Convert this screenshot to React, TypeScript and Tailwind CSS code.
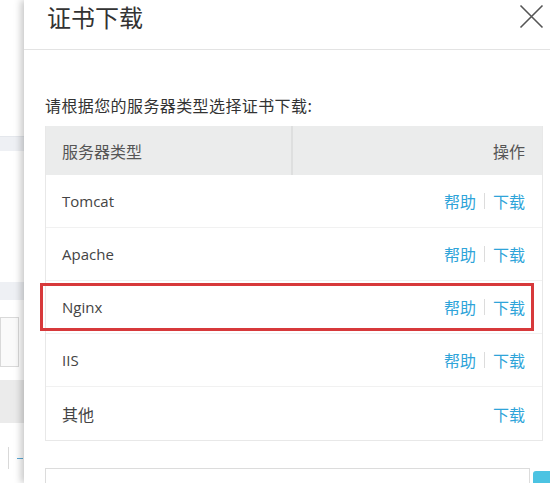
import React from "react";

const cjk = { fontFamily: '"Microsoft YaHei", "Noto Sans CJK SC", "Noto Sans", sans-serif' };
const latin = { fontFamily: '"Open Sans", "Noto Sans CJK SC", sans-serif' };

const rows: { name: string; help: boolean; zh?: boolean }[] = [
  { name: "Tomcat", help: true },
  { name: "Apache", help: true },
  { name: "Nginx", help: true },
  { name: "IIS", help: true },
  { name: "其他", help: false, zh: true },
];

export default function App() {
  return (
    <div className="w-[550px] h-[483px] overflow-hidden flex bg-white relative" style={cjk}>
      {/* background page strip */}
      <div className="w-[24px] h-full flex flex-col shrink-0 bg-white">
        <div className="h-[136px]" />
        <div className="h-[15px] bg-[#eef0f4] border-t border-[#e4e7ec]" />
        <div className="h-[131px]" />
        <div className="h-[18px] bg-[#eef0f4]" />
        <div className="h-[17px]" />
        <div className="h-[50px] w-[19px] border border-[#d9d9d9] bg-[#fafafa]" />
        <div className="h-[13px]" />
        <div className="h-[43px] bg-[#ebebeb]" />
        <div className="h-[24px]" />
        <div className="flex items-center gap-[8px] pl-[8px] h-[22px]">
          <div className="w-px h-[22px] bg-[#d9d9d9]" />
          <div className="w-[6px] h-px bg-[#5aa9d6]" />
        </div>
      </div>

      {/* drawer */}
      <div className="relative z-10 flex-1 min-w-0 h-full bg-white shadow-[-3px_0_7px_rgba(0,0,0,0.22)] flex flex-col">
        <div className="h-[50px] border-b border-[#e3e3e3] flex items-start justify-between pl-[23px] pr-[6px] shrink-0">
          <div className="text-[24px] leading-[34px] text-[#333]" style={cjk}>
            证书下载
          </div>
          <svg width="25" height="25" viewBox="0 0 25 25" className="mt-[4px]">
            <path d="M1.5 1.5 L23.5 23.5 M23.5 1.5 L1.5 23.5" stroke="#555" strokeWidth="1.6" fill="none" />
          </svg>
        </div>

        <div className="pl-[21px] flex flex-col">
          <div className="mt-[43px] h-[24px] text-[16px] leading-[24px] tracking-[0.4px] text-[#333]">
            请根据您的服务器类型选择证书下载:
          </div>

          <div className="mt-[9px] relative border-x border-[#e8e8e8] border-b w-[498px]">
            <div className="h-[49px] bg-[#ebecec] flex text-[16px] text-[#555]">
              <div className="w-[247px] border-r-2 border-[#dedfdf] flex items-center pl-[16px]">
                服务器类型
              </div>
              <div className="flex-1 flex items-center justify-end pr-[17px]">操作</div>
            </div>
            {rows.map((r, i) => (
              <div
                key={r.name}
                className={
                  "h-[53px] flex items-center justify-between pl-[16px] pr-[17px] " +
                  (i < rows.length - 1 ? "border-b border-[#f1f1f1]" : "")
                }
              >
                <div className={r.zh ? "text-[16px] text-[#444]" : "text-[15px] text-[#444]"} style={r.zh ? cjk : latin}>
                  {r.name}
                </div>
                <div className="flex items-center text-[16px] text-[#2fa4d9]">
                  {r.help && (
                    <>
                      <span>帮助</span>
                      <span className="w-px h-[16px] bg-[#dcdcdc] mx-[8px]" />
                    </>
                  )}
                  <span>下载</span>
                </div>
              </div>
            ))}
            {/* red annotation box */}
            <div className="absolute left-[-6px] top-[157px] w-[494px] h-[48px] border-[3px] border-[#d7393b] pointer-events-none" />
          </div>

          <div className="mt-[27px] w-[498px] flex items-start">
            <div className="w-[485px] shrink-0 h-[30px] border border-[#dcdcdc] border-b-0" />
            <div className="ml-[3px] mt-[3px] shrink-0 w-[20px] h-[20px] bg-[#4cc3e2] rounded-tl-[3px]" />
          </div>
        </div>
      </div>
    </div>
  );
}
